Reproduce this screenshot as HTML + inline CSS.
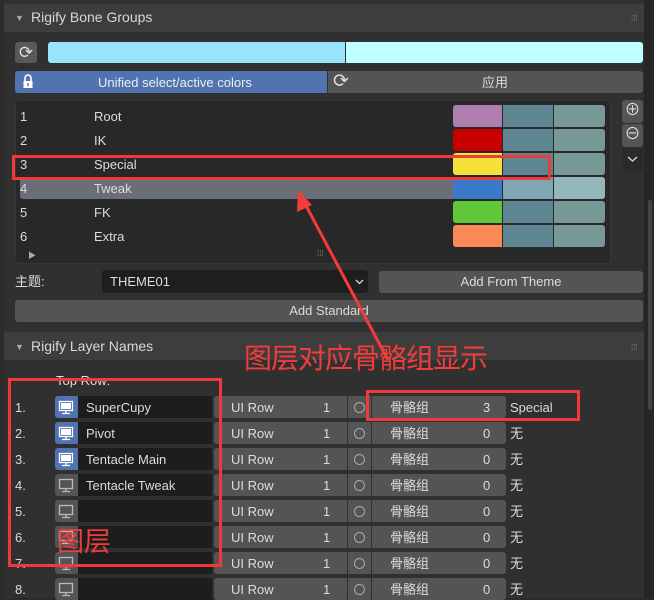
<!DOCTYPE html><html><head><meta charset="utf-8"><style>
*{margin:0;padding:0;box-sizing:border-box}
body{width:654px;height:598px;background:#2b2b2b;position:relative;overflow:hidden;font-family:"Liberation Sans","Noto Sans CJK SC",sans-serif;font-size:13px;color:#dcdcdc}
.a{position:absolute}
.btn{position:absolute;background:#545454;border-radius:3px;text-align:center;line-height:22px}
.t{position:absolute;white-space:nowrap;line-height:15px}
.red{position:absolute;border:3px solid #f03a3a}
.rt{position:absolute;color:#f23c3c;font-family:"Noto Sans CJK SC",sans-serif;white-space:nowrap;line-height:1}
</style></head><body>
<div class="a" style="left:4px;top:0;width:640px;height:598px;background:#303030"></div>
<div class="a" style="left:4px;top:4px;width:640px;height:28px;background:#3d3d3d"></div>
<div class="a" style="left:644px;top:0;width:10px;height:598px;background:#262626"></div>
<div class="a" style="left:648px;top:200px;width:4px;height:210px;background:#444;border-radius:2px"></div>
<div class="t" style="left:15px;top:11px;font-size:9px;color:#aaa">▼</div>
<div class="t" style="left:31px;top:10px;font-size:14px;color:#d8d8d8">Rigify Bone Groups</div>
<div class="t" style="left:631px;top:11px;font-size:8px;color:#888">⁞⁞⁞</div>
<div class="btn" style="left:15px;top:42px;width:22px;height:21px;background:#595959;color:#ddd;font-size:17px;line-height:21px">⟳</div>
<div class="a" style="left:48px;top:42px;width:297px;height:21px;background:#98e4fb;border-radius:3px 0 0 3px"></div>
<div class="a" style="left:346px;top:42px;width:297px;height:21px;background:#c0ffff;border-radius:0 3px 3px 0"></div>
<div class="a" style="left:15px;top:71px;width:312px;height:22px;background:#5174b0;border-radius:3px 0 0 3px"></div>
<div class="a" style="left:328px;top:71px;width:315px;height:22px;background:#545454;border-radius:0 3px 3px 0"></div>
<svg class="a" style="left:22px;top:74px" width="12" height="16"><path d="M3 7V4a3 3 0 0 1 6 0v3" stroke="#fff" stroke-width="1.6" fill="none"/><rect x="1.5" y="7" width="9" height="7" fill="#fff"/><rect x="5.3" y="9" width="1.4" height="3" fill="#5174b0"/></svg>
<div class="t" style="left:98px;top:75px;color:#eee">Unified select/active colors</div>
<div class="t" style="left:333px;top:72px;font-size:19px;line-height:20px;color:#ddd">⟳</div>
<div class="t" style="left:482px;top:75px;color:#ddd">应用</div>
<div class="a" style="left:15px;top:100px;width:596px;height:164px;background:#282828;border-radius:4px;border:1px solid #363636"></div>
<div class="a" style="left:20px;top:177px;width:434px;height:22px;background:#6a6e78;border-radius:3px 0 0 3px"></div>
<div id="rows"></div>
<div class="btn" style="left:622px;top:100px;width:21px;height:23px;background:#545454;color:#ddd;font-size:16px;line-height:22px">⊕</div>
<div class="btn" style="left:622px;top:124px;width:21px;height:23px;background:#545454;color:#ddd;font-size:16px;line-height:22px">⊖</div>
<div class="a" style="left:622px;top:148px;width:21px;height:23px;background:#2a2a2a;border-radius:3px"></div>
<svg class="a" style="left:627px;top:155px" width="11" height="8"><path d="M1 2l4.5 4 4.5-4" stroke="#ddd" stroke-width="1.3" fill="none"/></svg>
<div class="t" style="left:28px;top:248px;font-size:8px;color:#aaa">▶</div>
<div class="t" style="left:317px;top:246px;font-size:8px;color:#888">⁞⁞⁞</div>
<div class="t" style="left:15px;top:274px;color:#ddd">主题:</div>
<div class="a" style="left:102px;top:270px;width:266px;height:23px;background:#1e1e1e;border-radius:3px"></div>
<div class="t" style="left:110px;top:274px;color:#ddd">THEME01</div>
<svg class="a" style="left:355px;top:279px" width="9" height="6"><path d="M1 1l3.5 3.5 3.5-3.5" stroke="#ddd" stroke-width="1.3" fill="none"/></svg>
<div class="btn" style="left:379px;top:271px;width:264px;height:22px">Add From Theme</div>
<div class="btn" style="left:15px;top:300px;width:628px;height:22px">Add Standard</div>
<div class="a" style="left:4px;top:332px;width:640px;height:28px;background:#3d3d3d"></div>
<div class="t" style="left:15px;top:340px;font-size:9px;color:#aaa">▼</div>
<div class="t" style="left:31px;top:339px;font-size:14px;color:#d8d8d8">Rigify Layer Names</div>
<div class="t" style="left:631px;top:340px;font-size:8px;color:#888">⁞⁞⁞</div>
<div class="t" style="left:56px;top:373px;color:#ddd">Top Row:</div>
<div id="lrows"></div>
<div class="red" style="left:12px;top:155px;width:539px;height:25px"></div>
<div class="red" style="left:8px;top:378px;width:214px;height:189px"></div>
<div class="red" style="left:366px;top:390px;width:214px;height:31px"></div>
<div class="rt" style="left:244px;top:343px;font-size:28px;letter-spacing:-1px">图层对应骨骼组显示</div>
<div class="rt" style="left:57px;top:526px;font-size:27px">图层</div>
<svg class="a" style="left:0;top:0" width="654" height="598"><path d="M388 360 L303 200" stroke="#f23c3c" stroke-width="3"/><path d="M298 190 L297 212 L312 205 Z" fill="#f23c3c"/></svg>
<script>
var cols=[["#b07db0","#5d8592","#779998"],["#c80000","#5d8592","#779998"],["#f5e13a","#5d8592","#779998"],["#3a7ac8","#7fa6b5","#94b7bb"],["#5ec83a","#5d8592","#779998"],["#f98a55","#5d8592","#779998"]];
var n=["Root","IK","Special","Tweak","FK","Extra"],h="";
for(var i=0;i<6;i++){var y=105+i*24;
h+='<div class="t" style="left:20px;top:'+(y+4)+'px">'+(i+1)+'</div><div class="t" style="left:94px;top:'+(y+4)+'px">'+n[i]+'</div>';
h+='<div class="a" style="left:453px;top:'+y+'px;width:49px;height:22px;background:'+cols[i][0]+';border-radius:3px 0 0 3px"></div>';
h+='<div class="a" style="left:503px;top:'+y+'px;width:50px;height:22px;background:'+cols[i][1]+'"></div>';
h+='<div class="a" style="left:554px;top:'+y+'px;width:51px;height:22px;background:'+cols[i][2]+';border-radius:0 3px 3px 0"></div>';}
document.getElementById("rows").innerHTML=h;
var ln=["SuperCupy","Pivot","Tentacle Main","Tentacle Tweak","","","",""];h="";
for(var i=0;i<8;i++){var y=396+i*26;
h+='<div class="t" style="left:15px;top:'+(y+4)+'px">'+(i+1)+'.</div>';
h+='<div class="a" style="left:55px;top:'+y+'px;width:23px;height:22px;border-radius:3px 0 0 3px;background:'+(i<3?"#5174b0":"#545454")+'"></div>';
h+='<svg class="a" style="left:58px;top:'+(y+4)+'px" width="16" height="15"><rect x="1.5" y="1.5" width="13" height="9" fill="none" stroke="'+(i<3?"#fff":"#bbb")+'" stroke-width="1.3"/>'+(i<3?'<rect x="3" y="3" width="10" height="6" fill="#fff"/>':'')+'<path d="M8 11v2M4 13.5h8" stroke="'+(i<3?"#fff":"#bbb")+'" stroke-width="1.3"/></svg>';
h+='<div class="a" style="left:78px;top:'+y+'px;width:134px;height:22px;background:#1d1d1d"></div>';
h+='<div class="t" style="left:86px;top:'+(y+4)+'px">'+ln[i]+'</div>';
h+='<div class="a" style="left:214px;top:'+y+'px;width:133px;height:22px;background:#545454;border-radius:3px 0 0 3px"></div>';
h+='<div class="t" style="left:231px;top:'+(y+4)+'px">UI Row</div><div class="t" style="left:323px;top:'+(y+4)+'px">1</div>';
h+='<div class="a" style="left:348px;top:'+y+'px;width:23px;height:22px;background:#545454"></div><div class="a" style="left:354px;top:'+(y+6)+'px;width:11px;height:11px;border:1px solid #aaa;border-radius:50%"></div>';
h+='<div class="a" style="left:372px;top:'+y+'px;width:134px;height:22px;background:#545454;border-radius:0 3px 3px 0"></div>';
h+='<div class="t" style="left:390px;top:'+(y+4)+'px">骨骼组</div><div class="t" style="left:483px;top:'+(y+4)+'px">'+(i==0?3:0)+'</div>';
h+='<div class="t" style="left:510px;top:'+(y+4)+'px">'+(i==0?"Special":"无")+'</div>';}
document.getElementById("lrows").innerHTML=h;
</script>
</body></html>
